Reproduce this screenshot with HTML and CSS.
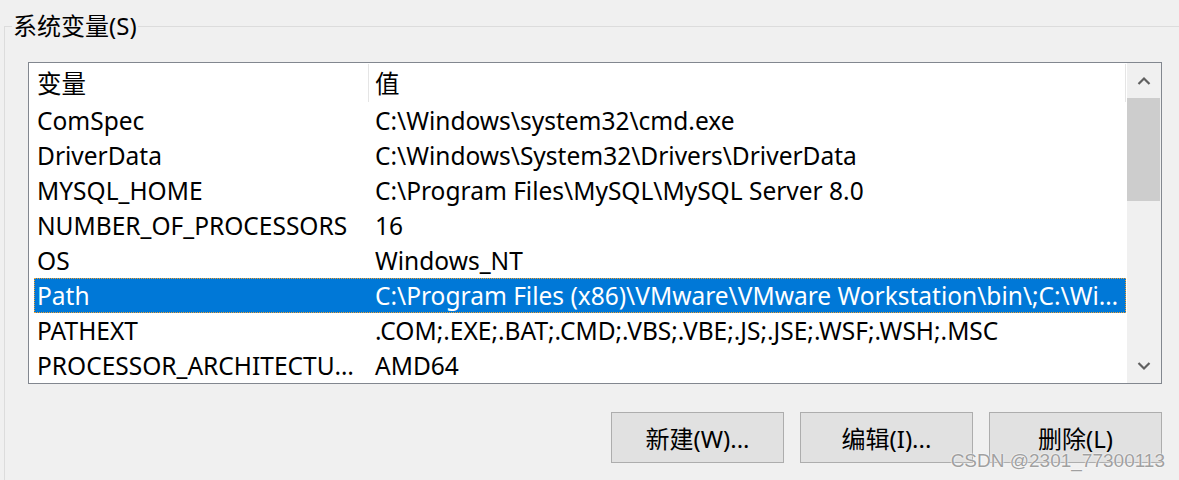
FILE: index.html
```html
<!DOCTYPE html>
<html lang="zh-CN">
<head>
<meta charset="utf-8">
<title>系统变量</title>
<link rel="stylesheet" href="styles.css">
</head>
<body>
<fieldset class="group">
  <legend class="group-label">系统变量(S)</legend>
  <div class="listbox">
    <div class="table">
      <div class="row head">
        <div class="cell c1">变量</div>
        <div class="cell c2">值</div>
      </div>
      <div class="row"><div class="cell c1">ComSpec</div><div class="cell c2">C:\Windows\system32\cmd.exe</div></div>
      <div class="row"><div class="cell c1">DriverData</div><div class="cell c2">C:\Windows\System32\Drivers\DriverData</div></div>
      <div class="row"><div class="cell c1">MYSQL_HOME</div><div class="cell c2">C:\Program Files\MySQL\MySQL Server 8.0</div></div>
      <div class="row"><div class="cell c1">NUMBER_OF_PROCESSORS</div><div class="cell c2">16</div></div>
      <div class="row"><div class="cell c1">OS</div><div class="cell c2">Windows_NT</div></div>
      <div class="row selected"><div class="cell c1">Path</div><div class="cell c2">C:\Program Files (x86)\VMware\VMware Workstation\bin\;C:\Windows\system32;C:\Windows</div></div>
      <div class="row"><div class="cell c1">PATHEXT</div><div class="cell c2">.COM;.EXE;.BAT;.CMD;.VBS;.VBE;.JS;.JSE;.WSF;.WSH;.MSC</div></div>
      <div class="row"><div class="cell c1">PROCESSOR_ARCHITECTURE</div><div class="cell c2">AMD64</div></div>
    </div>
    <div class="scrollbar">
      <div class="arrow">
        <svg width="14" height="10" viewBox="0 0 14 10"><polyline points="1.5,8 7,2.5 12.5,8" fill="none" stroke="#606060" stroke-width="2.2"/></svg>
      </div>
      <div class="thumb"></div>
      <div class="track"></div>
      <div class="arrow">
        <svg width="14" height="10" viewBox="0 0 14 10"><polyline points="1.5,2 7,7.5 12.5,2" fill="none" stroke="#606060" stroke-width="2.2"/></svg>
      </div>
    </div>
  </div>
  <div class="buttons">
    <button class="btn">新建(W)...</button>
    <button class="btn">编辑(I)...</button>
    <button class="btn">删除(L)</button>
  </div>
</fieldset>
<div class="watermark">CSDN @2301_77300113</div>
</body>
</html>
```

FILE: styles.css
```css
html, body {
  margin: 0;
  padding: 0;
}
body {
  background: #f0f0f0;
  width: 1179px;
  height: 480px;
  overflow: hidden;
  position: relative;
  font-family: "Noto Sans", "Noto Sans CJK SC", sans-serif;
  font-size: 24px;
  color: #000;
}
.group {
  margin: 12px 0 0 4px;
  padding: 22px 0 0 7px;
  border: 1px solid #dcdcdc;
  border-right: none;
  border-bottom: none;
  min-width: 0;
  height: 480px;
  box-sizing: border-box;
}
.group-label {
  padding: 0 1px;
  line-height: 28px;
  height: 28px;
}
.listbox {
  margin-left: 16px;
  width: 1134px;
  height: 322px;
  box-sizing: border-box;
  border: 1px solid #82878f;
  background: #fff;
  display: flex;
  font-size: 24.5px;
}
.table {
  flex: 1;
  min-width: 0;
  padding-left: 5px;
  padding-right: 1px;
}
.row {
  display: grid;
  grid-template-columns: 334px 1fr;
  height: 35px;
  align-items: center;
  white-space: nowrap;
}
.row.head {
  height: 40px;
  align-items: stretch;
}
.head .cell {
  display: flex;
  align-items: center;
  margin: 1px 0 1px;
}
.head .c2 {
  border-left: 1px solid #e5e5e5;
  border-right: 1px solid #e5e5e5;
  padding-left: 6px;
}
.cell {
  overflow: hidden;
  text-overflow: ellipsis;
  line-height: 35px;
}
.c1 {
  padding-left: 3px;
  padding-right: 9px;
}
.c2 {
  padding-left: 7px;
  padding-right: 4px;
}
.selected {
  background: #0078d7;
  color: #fff;
  outline: 1px dotted #f0a030;
  outline-offset: -1px;
}
.scrollbar {
  width: 34px;
  background: #f0f0f0;
  display: flex;
  flex-direction: column;
}
.arrow {
  height: 35px;
  display: flex;
  align-items: center;
  justify-content: center;
}
.thumb {
  height: 103px;
  background: #cdcdcd;
  margin-right: 1px;
}
.track {
  flex: 1;
}
.buttons {
  margin-top: 28px;
  margin-left: 16px;
  width: 1134px;
  display: flex;
  justify-content: flex-end;
  gap: 16px;
}
.btn {
  width: 173px;
  height: 51px;
  background: #e1e1e1;
  border: 1px solid #adadad;
  font-family: inherit;
  font-size: 24px;
  color: #000;
  padding: 0;
}
.watermark {
  position: absolute;
  right: 14px;
  bottom: 8px;
  font-family: "Liberation Sans", sans-serif;
  font-size: 19px;
  color: #a0a0a0;
  text-shadow: 0 0 2px #fff, 0 0 1px #fff;
}
```
